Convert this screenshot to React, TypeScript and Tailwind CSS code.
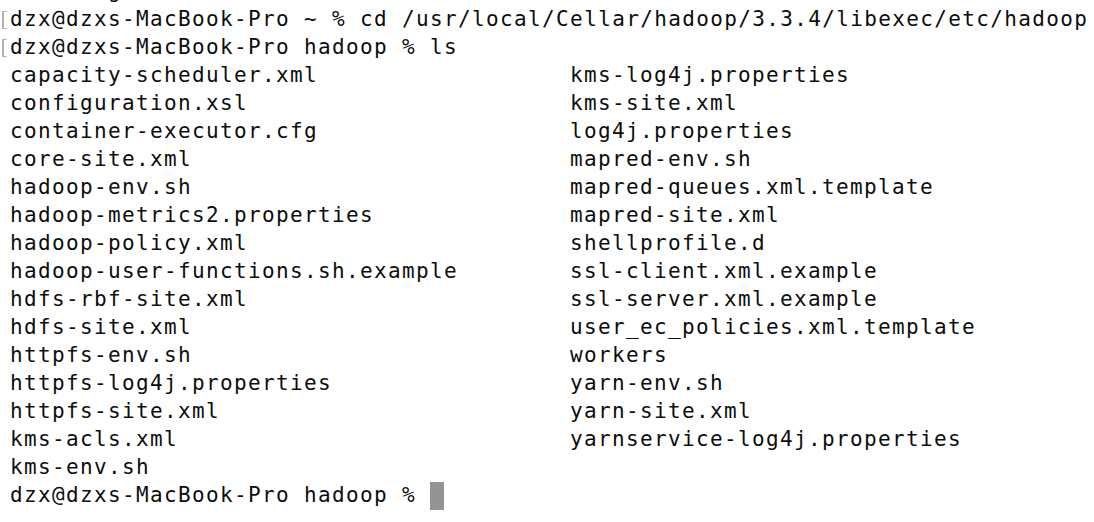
import React from "react";

const left = [
  "capacity-scheduler.xml",
  "configuration.xsl",
  "container-executor.cfg",
  "core-site.xml",
  "hadoop-env.sh",
  "hadoop-metrics2.properties",
  "hadoop-policy.xml",
  "hadoop-user-functions.sh.example",
  "hdfs-rbf-site.xml",
  "hdfs-site.xml",
  "httpfs-env.sh",
  "httpfs-log4j.properties",
  "httpfs-site.xml",
  "kms-acls.xml",
  "kms-env.sh",
];
const right = [
  "kms-log4j.properties",
  "kms-site.xml",
  "log4j.properties",
  "mapred-env.sh",
  "mapred-queues.xml.template",
  "mapred-site.xml",
  "shellprofile.d",
  "ssl-client.xml.example",
  "ssl-server.xml.example",
  "user_ec_policies.xml.template",
  "workers",
  "yarn-env.sh",
  "yarn-site.xml",
  "yarnservice-log4j.properties",
  "",
];

function Mark({ show }: { show?: boolean }) {
  return (
    <div className="w-[10px] h-[28px] flex items-start pt-[6px] pl-[2px] shrink-0">
      {show && (
        <div className="w-[5px] h-[18px] border-l-2 border-t border-b border-[#b4b4b4]" />
      )}
    </div>
  );
}

function Line({ text, mark, children }: { text: string; mark?: boolean; children?: React.ReactNode }) {
  return (
    <div className="flex h-[28px] leading-[28px] whitespace-pre">
      <Mark show={mark} />
      <span>{text}</span>
      {children}
    </div>
  );
}

export default function App() {
  return (
    <div
      className="w-[1094px] h-[522px] overflow-hidden bg-white text-[#0d0d0d] text-[21px] tracking-[1.36px] pt-[5px]"
      style={{ fontFamily: '"DejaVu Sans Mono", "Liberation Mono", monospace' }}
    >
      <div className="-mt-[28px]">
        <Line text="Last login: Sat Jan 14 10:26:35 on console" />
        <Line text="dzx@dzxs-MacBook-Pro ~ % cd /usr/local/Cellar/hadoop/3.3.4/libexec/etc/hadoop" mark />
        <Line text="dzx@dzxs-MacBook-Pro hadoop % ls" mark />
        {left.map((l, i) => (
          <div key={i} className="flex h-[28px] leading-[28px] whitespace-pre">
            <Mark />
            <span className="w-[560px] shrink-0">{l}</span>
            <span>{right[i]}</span>
          </div>
        ))}
        <Line text="dzx@dzxs-MacBook-Pro hadoop % ">
          <span className="inline-block w-[14px] h-[28px] mt-[1px] bg-[#939393]" />
        </Line>
      </div>
    </div>
  );
}
